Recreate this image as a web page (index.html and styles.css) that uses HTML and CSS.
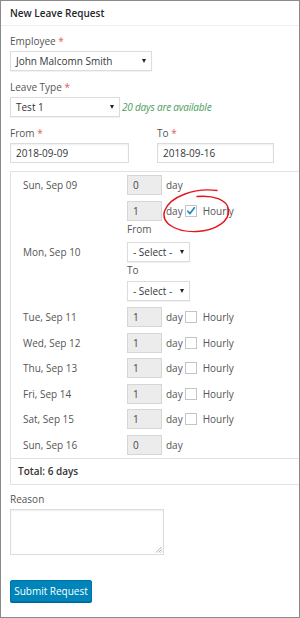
FILE: index.html
```html
<!DOCTYPE html>
<html>
<head>
<meta charset="utf-8">
<link rel="stylesheet" href="styles.css">
</head>
<body>
<div class="frame">
  <div class="head">New Leave Request</div>
  <div class="content">
    <div class="field">
      <div class="lbl">Employee <span class="req">*</span></div>
      <div class="select sel-emp"><span>John Malcomn Smith</span><span class="arrow"></span></div>
    </div>
    <div class="field">
      <div class="lbl">Leave Type <span class="req">*</span></div>
      <div class="inline">
        <div class="select sel-type"><span>Test 1</span><span class="arrow"></span></div>
        <span class="avail">20 days are available</span>
      </div>
    </div>
    <div class="field dates">
      <div class="dcol from">
        <div class="lbl">From <span class="req">*</span></div>
        <div class="input in-from">2018-09-09</div>
      </div>
      <div class="dcol to">
        <div class="lbl">To <span class="req">*</span></div>
        <div class="input in-to">2018-09-16</div>
      </div>
    </div>

    <div class="days">
      <div class="drow">
        <div class="dlabel">Sun, Sep 09</div>
        <div class="dctl">
          <div class="line"><div class="num">0</div><span class="unit">day</span></div>
          <div class="line gap"><div class="num">1</div><span class="unit">day</span><span class="cb checked"><svg viewBox="0 0 12 12" width="12" height="12"><path d="M2.8 6.2 L5 8.6 L9.4 2.8" fill="none" stroke="#1e8cbe" stroke-width="1.7" stroke-linecap="round" stroke-linejoin="round"/></svg></span><span class="hourly">Hourly</span></div>
          <div class="sub">From</div>
        </div>
      </div>
      <div class="drow">
        <div class="dlabel">Mon, Sep 10</div>
        <div class="dctl">
          <div class="select sel-small"><span>- Select -</span><span class="arrow"></span></div>
          <div class="sub to-lbl">To</div>
          <div class="select sel-small"><span>- Select -</span><span class="arrow"></span></div>
        </div>
      </div>
      <div class="drow">
        <div class="dlabel">Tue, Sep 11</div>
        <div class="dctl"><div class="line"><div class="num">1</div><span class="unit">day</span><span class="cb"></span><span class="hourly">Hourly</span></div></div>
      </div>
      <div class="drow">
        <div class="dlabel">Wed, Sep 12</div>
        <div class="dctl"><div class="line"><div class="num">1</div><span class="unit">day</span><span class="cb"></span><span class="hourly">Hourly</span></div></div>
      </div>
      <div class="drow">
        <div class="dlabel">Thu, Sep 13</div>
        <div class="dctl"><div class="line"><div class="num">1</div><span class="unit">day</span><span class="cb"></span><span class="hourly">Hourly</span></div></div>
      </div>
      <div class="drow">
        <div class="dlabel">Fri, Sep 14</div>
        <div class="dctl"><div class="line"><div class="num">1</div><span class="unit">day</span><span class="cb"></span><span class="hourly">Hourly</span></div></div>
      </div>
      <div class="drow">
        <div class="dlabel">Sat, Sep 15</div>
        <div class="dctl"><div class="line"><div class="num">1</div><span class="unit">day</span><span class="cb"></span><span class="hourly">Hourly</span></div></div>
      </div>
      <div class="drow">
        <div class="dlabel">Sun, Sep 16</div>
        <div class="dctl"><div class="line"><div class="num">0</div><span class="unit">day</span></div></div>
      </div>
      <div class="total">Total: 6 days</div>
    </div>

    <div class="field reason">
      <div class="lbl">Reason</div>
      <div class="textarea"><svg class="grip" viewBox="0 0 7 7" width="7" height="7"><path d="M1 6.5 L6.5 1 M3.5 6.5 L6.5 3.5 M5.5 6.5 L6.5 5.5" stroke="#999" stroke-width="0.8"/></svg></div>
    </div>
    <div class="submit">Submit Request</div>
  </div>
  <svg class="scribble" viewBox="0 0 300 618" width="300" height="618">
    <path d="M217 190.5 C 196 187.5, 170 196, 164.5 211 C 160.5 224, 178 232.5, 197 231.5 C 216 230.5, 230 221, 228.5 209.5 C 227 199.5, 213 195, 197 196.5" fill="none" stroke="#e3161f" stroke-width="1.4" stroke-linecap="round"/>
  </svg>
</div>
</body>
</html>
```

FILE: styles.css
```css
* { box-sizing: border-box; }
html, body { margin: 0; padding: 0; background: #fff; }
body {
  font-family: "Open Sans", "Noto Sans", sans-serif;
  font-size: 10px;
  color: #555;
}
.frame {
  position: relative;
  width: 300px;
  height: 618px;
  border: 1px solid #8a8a8a;
  overflow: hidden;
  background: #fff;
}
.head {
  height: 25px;
  border-bottom: 1px solid #eeeeee;
  padding-left: 9px;
  line-height: 24px;
  font-weight: 600;
  color: #23282d;
}
.content {
  padding: 7px 0 0 9px;
}
.field { margin-bottom: 8px; }
.lbl {
  line-height: 16px;
  margin-bottom: 2px;
  color: #555;
}
.req { color: #e25a5a; }
.select {
  display: flex;
  align-items: center;
  justify-content: space-between;
  height: 20px;
  border: 1px solid #dcdcdc;
  background: #fff;
  box-shadow: 0 1px 1px rgba(0,0,0,0.05);
  padding: 0 5px 0 5px;
  color: #32373c;
}
.arrow {
  width: 0; height: 0;
  border-left: 2.5px solid transparent;
  border-right: 2.5px solid transparent;
  border-top: 4.5px solid #222;
}
.sel-emp { width: 142px; }
.sel-type { width: 110px; }
.inline { display: flex; align-items: center; }
.avail {
  margin-left: 2px;
  font-style: italic;
  color: #4a9d5a;
  letter-spacing: -0.2px;
}
.dates { display: flex; }
.dcol.from { width: 147px; }
.input {
  height: 20px;
  border: 1px solid #dcdcdc;
  box-shadow: inset 0 1px 2px rgba(0,0,0,0.07);
  line-height: 18px;
  padding-left: 5px;
  color: #32373c;
}
.in-from { width: 119px; }
.in-to { width: 117px; }

.days {
  width: 300px;
  border: 1px solid #e2e2e2;
}
.drow {
  display: flex;
  padding: 2.8px 0;
}
.dlabel {
  width: 116px;
  padding-left: 12px;
  line-height: 20px;
  color: #555;
  flex: none;
}
.dctl { flex: none; }
.line { display: flex; align-items: center; height: 20px; }
.line.gap { margin-top: 6px; }
.num {
  width: 35px;
  height: 20px;
  background: #ececec;
  border: 1px solid #d6d6d6;
  line-height: 18px;
  padding-left: 5px;
  color: #444;
}
.unit { margin-left: 4px; color: #555; }
.cb {
  display: inline-block;
  width: 12px;
  height: 12px;
  border: 1px solid #c4c4c4;
  background: #fff;
  margin-left: 2px;
  position: relative;
}
.cb svg { position: absolute; left: -1px; top: -1px; }
.hourly { margin-left: 6px; color: #555; }
.sub { line-height: 16px; color: #555; }
.to-lbl { margin-bottom: 3px; }
.sel-small { width: 63px; padding-left: 5px; }
.total {
  border-top: 1px solid #e2e2e2;
  height: 26px;
  line-height: 25px;
  padding-left: 7px;
  font-weight: 600;
  color: #333;
}
.reason { margin-top: 6px; }
.textarea {
  position: relative;
  width: 154px;
  height: 46px;
  border: 1px solid #dcdcdc;
  box-shadow: inset 0 1px 2px rgba(0,0,0,0.07);
}
.grip { position: absolute; right: 1px; bottom: 1px; }
.submit {
  margin-top: 25px;
  width: 82px;
  height: 22px;
  line-height: 20px;
  text-align: center;
  background: #0085ba;
  border: 1px solid #0073aa;
  border-radius: 2px;
  box-shadow: 0 1px 0 #006799;
  color: #fff;
}
.scribble { position: absolute; left: -1px; top: -1px; pointer-events: none; }
```
